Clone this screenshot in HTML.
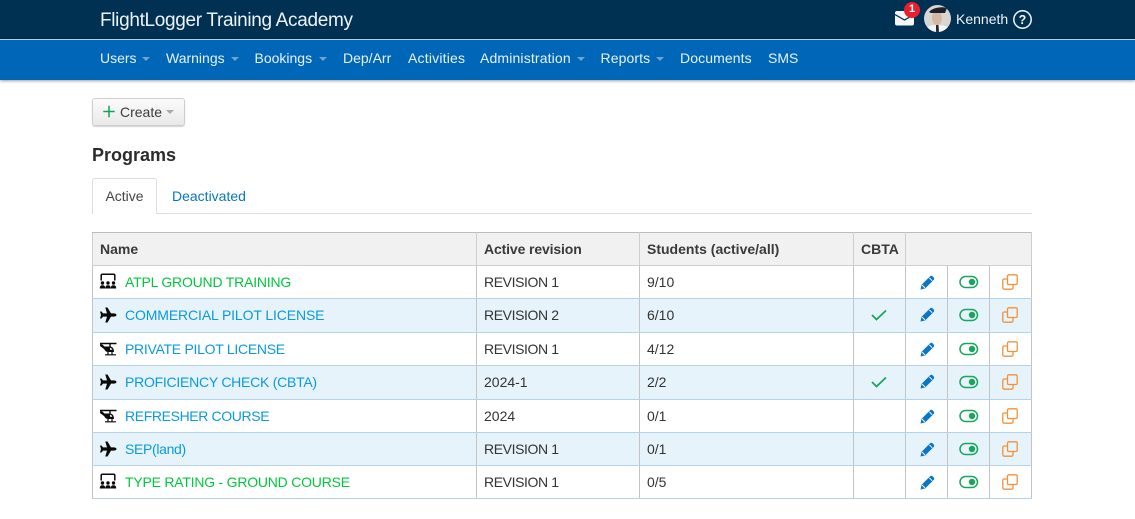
<!DOCTYPE html>
<html><head><meta charset="utf-8"><style>
*{box-sizing:border-box}
html,body{margin:0;padding:0;width:1135px;height:519px;overflow:hidden;background:#fff;font-family:"Liberation Sans",sans-serif;font-size:14px;color:#333}
.a{position:absolute;white-space:nowrap}
#top{position:absolute;left:0;top:0;width:1135px;height:39px;background:#003052}
#nav{position:absolute;left:0;top:39px;width:1135px;height:41px;background:#0067b8;border-top:1px solid #b4cfe2;box-shadow:0 1px 3px rgba(0,0,0,.4)}
.n{position:absolute;top:50px;color:#e8f1f8;font-size:14px;line-height:17px;white-space:nowrap}
.c{position:absolute;top:57px;width:0;height:0;border-left:4px solid transparent;border-right:4px solid transparent;border-top:4px solid #6ea3d2}
table{position:absolute;left:92px;top:232px;width:939px;border-collapse:collapse;table-layout:fixed;font-size:14px}
td,th{padding:0 7px;text-align:left;border:1px solid #c4c4c4;border-top-color:#bcd7ea;border-bottom-color:#b4d3e8;white-space:nowrap;overflow:hidden}
th{background:#f1f1f1;border-color:#cfcfcf;border-top-color:#bdbdbd;font-weight:bold;color:#3a3a3a;height:33px}
tr.o td{background:#e7f3fa}
tr.t td{padding-bottom:2px}
td{position:relative;color:#333}
td.r{letter-spacing:-.4px}
td.i{padding:0;text-align:center}
tr.t td.i{padding-bottom:2px}
td svg{display:block;margin:auto}
td.pn svg{position:relative;left:1px}
td.cp svg{position:relative;left:-1px}
td.ch svg{position:relative;left:-1px}
.g{color:#00c83c}.b{color:#0a9adf}
.nm svg{position:absolute;left:6px;top:7px}
.nm span{position:absolute;left:32px;top:8px;line-height:17px}
</style></head><body>
<svg width="0" height="0" style="position:absolute"><defs>
<symbol id="pl" viewBox="0 0 18 18"><path d="M17.500 9c0 1-1.500 1.600-3 1.600H12L8.500 16.500H6.300L8 10.600H4L2.500 12.500H1L2 9 1 5.500H2.500L4 7.400H8L6.300 1.500H8.500L12 7.400H14.500C16 7.400 17.500 8 17.500 9z" fill="#0a0a0a"/></symbol>
<symbol id="he" viewBox="0 0 18 18"><path d="M1 3.500H17.500M11 3.500V6.500" fill="none" stroke="#0a0a0a" stroke-width="1.400"/><path d="M6 14.800H17M9 12V14.800M13 12V14.800" fill="none" stroke="#0a0a0a" stroke-width="1.200"/><path d="M1 4.200H3L5.500 6.500H11C13.500 6.500 15 8.500 15 12H9C7 12 6 10.500 5 9L1 6z" fill="#0a0a0a"/><path d="M11 7.800C12.300 8 13 8.800 13.300 9.800H11z" fill="#fff"/></symbol>
<symbol id="cl" viewBox="0 0 18 18"><path d="M2.200 7.500V2.500C2.200 1.800 2.700 1.300 3.400 1.300H14.600C15.300 1.300 15.800 1.800 15.800 2.500V7.500" fill="none" stroke="#0a0a0a" stroke-width="1.500"/><g fill="#0a0a0a"><circle cx="3.500" cy="10" r="1.700"/><circle cx="9" cy="10" r="1.700"/><circle cx="14.500" cy="10" r="1.700"/><path d="M.8 15.500C.8 12.800 1.800 12.200 3.500 12.200S6.200 12.800 6.200 15.500zM6.300 15.500C6.300 12.800 7.300 12.200 9 12.200S11.700 12.800 11.700 15.500zM11.800 15.500C11.800 12.800 12.800 12.200 14.500 12.200S17.200 12.800 17.200 15.500z"/></g></symbol>
<symbol id="pe" viewBox="0 0 15 15"><path d="M.5 14.500L1.500 9.900 10 1.400C10.800.6 11.800.6 12.500 1.300L13.700 2.500C14.400 3.200 14.400 4.200 13.600 5L5.100 13.500z" fill="#0b76c5"/><path d="M9.300 2.800L12.200 5.700M2 10L5 13" stroke="#fff" stroke-width=".9" fill="none"/></symbol>
<symbol id="to" viewBox="0 0 20 14"><rect x="1" y="1.500" width="17.500" height="11" rx="5.500" fill="none" stroke="#1aa55f" stroke-width="1.500"/><circle cx="13" cy="7" r="3.200" fill="#1aa55f"/></symbol>
<symbol id="co" viewBox="0 0 16 16"><g fill="none" stroke="#f0923a" stroke-width="1.300"><rect x="5.500" y=".8" width="9.700" height="9.700" rx="1.300"/><path d="M5.500 5H2.100C1.400 5 .8 5.600.8 6.300V13.900C.8 14.600 1.400 15.200 2.100 15.200H9.700C10.400 15.200 11 14.600 11 13.900V10.500"/></g></symbol>
<symbol id="ck" viewBox="0 0 16 12"><path d="M1 6L5.500 10.500 15 1.500" fill="none" stroke="#1aa55f" stroke-width="1.800"/></symbol>
</defs></svg>

<div id="top"></div>
<div id="nav"></div>
<div class="a" style="left:100px;top:9px;font-size:19px;line-height:24px;color:#eef3f7;letter-spacing:-.32px">FlightLogger Training Academy</div>

<svg class="a" style="left:895px;top:11px" width="20" height="15" viewBox="0 0 20 15"><rect width="19" height="14.500" rx="2" fill="#f4f6f8"/><path d="M0 3.500L9.500 9 19 3.500" fill="none" stroke="#003052" stroke-width="1.200"/></svg>
<div class="a" style="left:904px;top:2px;width:16px;height:16px;border-radius:8px;background:#e8202e;color:#fff;font-size:11px;font-weight:bold;line-height:15px;text-align:center">1</div>
<svg class="a" style="left:924px;top:5px" width="27" height="27" viewBox="0 0 27 27"><defs><clipPath id="av"><circle cx="13.500" cy="13.500" r="13.500"/></clipPath></defs><g clip-path="url(#av)"><rect width="27" height="27" fill="#d8d6d2"/><path d="M0 27C1 22 6 20 13.500 20S26 22 27 27z" fill="#f4f4f4"/><ellipse cx="13" cy="13" rx="5" ry="7" fill="#d4b8a6"/><path d="M5 7C8 3 17 1 23 3L21 8H7z" fill="#1d2228"/><path d="M12 20H14.500L15 27H12z" fill="#252a30"/></g></svg>
<div class="a" style="left:956px;top:11px;font-size:14px;line-height:17px;color:#eef3f7">Kenneth</div>
<svg class="a" style="left:1012px;top:9px" width="21" height="21" viewBox="0 0 21 21"><circle cx="10.500" cy="10.500" r="8.700" fill="none" stroke="#f2f5f8" stroke-width="1.500"/><text x="10.500" y="15" font-size="12.500" font-weight="bold" text-anchor="middle" fill="#f2f5f8" font-family="Liberation Sans">?</text></svg>

<div class="n" style="left:100px">Users</div><div class="c" style="left:142px"></div>
<div class="n" style="left:166px">Warnings</div><div class="c" style="left:231px"></div>
<div class="n" style="left:254.500px">Bookings</div><div class="c" style="left:319px"></div>
<div class="n" style="left:343px">Dep/Arr</div>
<div class="n" style="left:408px;letter-spacing:.2px">Activities</div>
<div class="n" style="left:480px;letter-spacing:.15px">Administration</div><div class="c" style="left:577px"></div>
<div class="n" style="left:600.500px;letter-spacing:.1px">Reports</div><div class="c" style="left:656px"></div>
<div class="n" style="left:680px;letter-spacing:.1px">Documents</div>
<div class="n" style="left:768px">SMS</div>

<div class="a" style="left:92px;top:98px;width:93px;height:28px;border:1px solid #cfcfcf;border-radius:3px;background:linear-gradient(#fbfbfb,#e9e9e9);box-shadow:0 1px 1px rgba(0,0,0,.18)"></div>
<svg class="a" style="left:103px;top:105px" width="12" height="13" viewBox="0 0 12 13"><path d="M6 .8V12.200M.3 6.500H11.700" stroke="#12a35a" stroke-width="1.500"/></svg>
<div class="a" style="left:120px;top:104px;line-height:17px;color:#3c3c3c">Create</div>
<div class="a" style="left:166px;top:110px;width:0;height:0;border-left:4px solid transparent;border-right:4px solid transparent;border-top:4px solid #aaa"></div>

<div class="a" style="left:92px;top:144px;font-size:18px;line-height:22px;font-weight:bold;color:#2c2c2c">Programs</div>

<div class="a" style="left:92px;top:213px;width:940px;height:1px;background:#ddd"></div>
<div class="a" style="left:92px;top:178px;width:65px;height:36px;background:#fff;border:1px solid #ddd;border-bottom:0;border-radius:3px 3px 0 0;text-align:center;line-height:35px;color:#444">Active</div>
<div class="a" style="left:172px;top:188px;line-height:17px;color:#0a77c0">Deactivated</div>

<table>
<colgroup><col style="width:384px"><col style="width:163px"><col style="width:214px"><col style="width:52px"><col style="width:42px"><col style="width:42px"><col style="width:42px"></colgroup>
<tr><th>Name</th><th style="letter-spacing:-.13px">Active revision</th><th>Students (active/all)</th><th>CBTA</th><th colspan="3" style="padding:0"></th></tr>
<tr style="height:33px"><td class="nm"><svg width="18" height="18"><use href="#cl"/></svg><span class="g" style="letter-spacing:-.2px">ATPL GROUND TRAINING</span></td><td class="r">REVISION 1</td><td>9/10</td><td></td><td class="i pn"><svg width="15" height="15"><use href="#pe"/></svg></td><td class="i"><svg width="20" height="14"><use href="#to"/></svg></td><td class="i cp"><svg width="16" height="16"><use href="#co"/></svg></td></tr>
<tr class="o t" style="height:34px"><td class="nm"><svg width="18" height="18"><use href="#pl"/></svg><span class="b" style="letter-spacing:-.12px">COMMERCIAL PILOT LICENSE</span></td><td class="r">REVISION 2</td><td>6/10</td><td class="i ch"><svg width="16" height="12"><use href="#ck"/></svg></td><td class="i pn"><svg width="15" height="15"><use href="#pe"/></svg></td><td class="i"><svg width="20" height="14"><use href="#to"/></svg></td><td class="i cp"><svg width="16" height="16"><use href="#co"/></svg></td></tr>
<tr style="height:33px"><td class="nm"><svg width="18" height="18"><use href="#he"/></svg><span class="b" style="letter-spacing:-.28px">PRIVATE PILOT LICENSE</span></td><td class="r">REVISION 1</td><td>4/12</td><td></td><td class="i pn"><svg width="15" height="15"><use href="#pe"/></svg></td><td class="i"><svg width="20" height="14"><use href="#to"/></svg></td><td class="i cp"><svg width="16" height="16"><use href="#co"/></svg></td></tr>
<tr class="o t" style="height:34px"><td class="nm"><svg width="18" height="18"><use href="#pl"/></svg><span class="b" style="letter-spacing:-.25px">PROFICIENCY CHECK (CBTA)</span></td><td>2024-1</td><td>2/2</td><td class="i ch"><svg width="16" height="12"><use href="#ck"/></svg></td><td class="i pn"><svg width="15" height="15"><use href="#pe"/></svg></td><td class="i"><svg width="20" height="14"><use href="#to"/></svg></td><td class="i cp"><svg width="16" height="16"><use href="#co"/></svg></td></tr>
<tr style="height:33px"><td class="nm"><svg width="18" height="18"><use href="#he"/></svg><span class="b" style="letter-spacing:-.37px">REFRESHER COURSE</span></td><td>2024</td><td>0/1</td><td></td><td class="i pn"><svg width="15" height="15"><use href="#pe"/></svg></td><td class="i"><svg width="20" height="14"><use href="#to"/></svg></td><td class="i cp"><svg width="16" height="16"><use href="#co"/></svg></td></tr>
<tr class="o" style="height:33px"><td class="nm"><svg width="18" height="18"><use href="#pl"/></svg><span class="b" style="letter-spacing:-.33px">SEP(land)</span></td><td class="r">REVISION 1</td><td>0/1</td><td></td><td class="i pn"><svg width="15" height="15"><use href="#pe"/></svg></td><td class="i"><svg width="20" height="14"><use href="#to"/></svg></td><td class="i cp"><svg width="16" height="16"><use href="#co"/></svg></td></tr>
<tr style="height:33px"><td class="nm"><svg width="18" height="18"><use href="#cl"/></svg><span class="g" style="letter-spacing:-.22px">TYPE RATING - GROUND COURSE</span></td><td class="r">REVISION 1</td><td>0/5</td><td></td><td class="i pn"><svg width="15" height="15"><use href="#pe"/></svg></td><td class="i"><svg width="20" height="14"><use href="#to"/></svg></td><td class="i cp"><svg width="16" height="16"><use href="#co"/></svg></td></tr>
</table>
</body></html>
